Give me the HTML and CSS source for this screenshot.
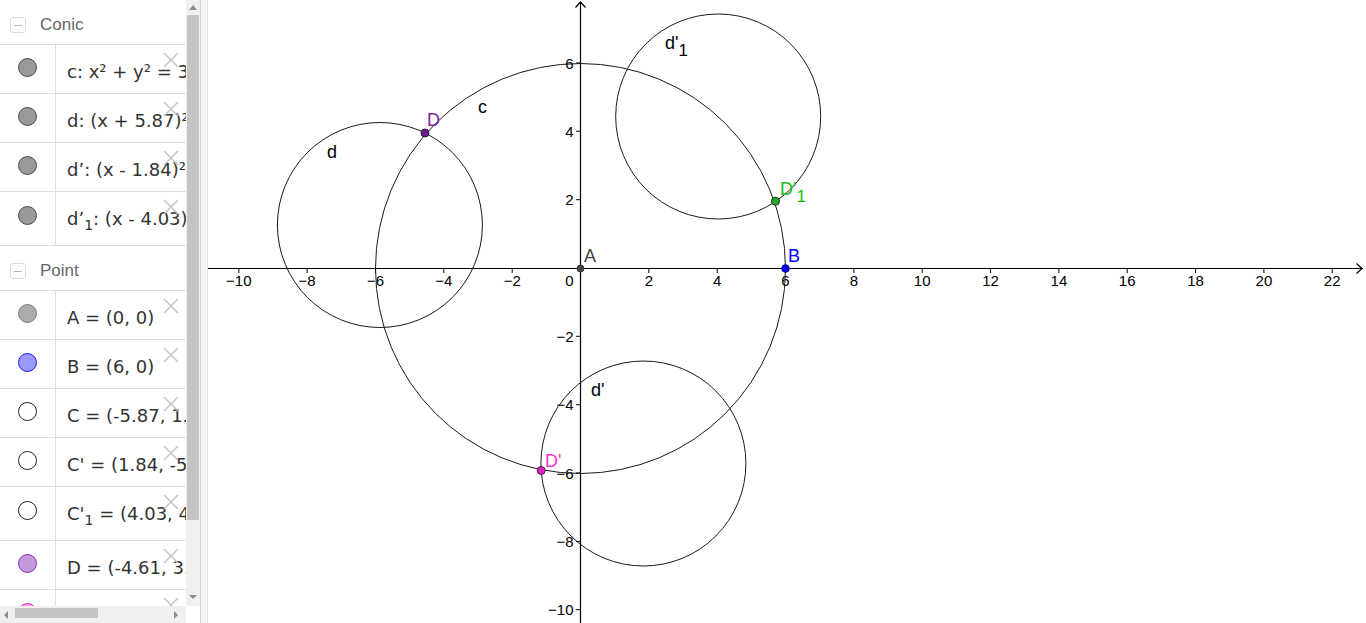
FILE: index.html
```html
<!DOCTYPE html>
<html>
<head>
<meta charset="utf-8">
<title>GeoGebra</title>
<link rel="stylesheet" href="styles.css">
</head>
<body>
<div class="app">
  <div class="algebra">
    <div class="alg-top">
      <div class="alg-list">
        <div class="group-head"><span class="collapse"><span class="minus"></span></span><span class="group-title">Conic</span></div>
        <div class="row">
          <div class="marble-cell"><span class="marble m-conic"></span></div>
          <div class="expr">c: x² + y² = 36</div>
          <svg class="del" viewBox="0 0 16 16"><path d="M1 1L15 15M15 1L1 15"/></svg>
        </div>
        <div class="row">
          <div class="marble-cell"><span class="marble m-conic"></span></div>
          <div class="expr">d: (x + 5.87)² + (y - 1.27)² = 9</div>
          <svg class="del" viewBox="0 0 16 16"><path d="M1 1L15 15M15 1L1 15"/></svg>
        </div>
        <div class="row">
          <div class="marble-cell"><span class="marble m-conic"></span></div>
          <div class="expr">d’: (x - 1.84)² + (y + 5.71)² = 9</div>
          <svg class="del" viewBox="0 0 16 16"><path d="M1 1L15 15M15 1L1 15"/></svg>
        </div>
        <div class="row tall">
          <div class="marble-cell"><span class="marble m-conic"></span></div>
          <div class="expr">d’<sub>1</sub>: (x - 4.03)² + (y - 4.44)² = 9</div>
          <svg class="del" viewBox="0 0 16 16"><path d="M1 1L15 15M15 1L1 15"/></svg>
        </div>
        <div class="group-head"><span class="collapse"><span class="minus"></span></span><span class="group-title">Point</span></div>
        <div class="row">
          <div class="marble-cell"><span class="marble m-a"></span></div>
          <div class="expr">A = (0, 0)</div>
          <svg class="del" viewBox="0 0 16 16"><path d="M1 1L15 15M15 1L1 15"/></svg>
        </div>
        <div class="row">
          <div class="marble-cell"><span class="marble m-b"></span></div>
          <div class="expr">B = (6, 0)</div>
          <svg class="del" viewBox="0 0 16 16"><path d="M1 1L15 15M15 1L1 15"/></svg>
        </div>
        <div class="row">
          <div class="marble-cell"><span class="marble m-off"></span></div>
          <div class="expr">C = (-5.87, 1.27)</div>
          <svg class="del" viewBox="0 0 16 16"><path d="M1 1L15 15M15 1L1 15"/></svg>
        </div>
        <div class="row">
          <div class="marble-cell"><span class="marble m-off"></span></div>
          <div class="expr">C' = (1.84, -5.71)</div>
          <svg class="del" viewBox="0 0 16 16"><path d="M1 1L15 15M15 1L1 15"/></svg>
        </div>
        <div class="row tall">
          <div class="marble-cell"><span class="marble m-off"></span></div>
          <div class="expr">C'<sub>1</sub> = (4.03, 4.44)</div>
          <svg class="del" viewBox="0 0 16 16"><path d="M1 1L15 15M15 1L1 15"/></svg>
        </div>
        <div class="row">
          <div class="marble-cell"><span class="marble m-d"></span></div>
          <div class="expr">D = (-4.61, 3.84)</div>
          <svg class="del" viewBox="0 0 16 16"><path d="M1 1L15 15M15 1L1 15"/></svg>
        </div>
        <div class="row">
          <div class="marble-cell"><span class="marble m-dp"></span></div>
          <div class="expr">D' = (-1.14, -5.89)</div>
          <svg class="del" viewBox="0 0 16 16"><path d="M1 1L15 15M15 1L1 15"/></svg>
        </div>
      </div>
      <div class="vscroll">
        <div class="arr-up"><span class="tri-up"></span></div>
        <div class="vthumb"></div>
        <div class="vtrack"></div>
        <div class="arr-down"><span class="tri-down"></span></div>
      </div>
    </div>
    <div class="hscroll">
      <div class="hbar">
        <div class="arr-left"><span class="tri-left"></span></div>
        <div class="hthumb"></div>
        <div class="htrack"></div>
        <div class="arr-right"><span class="tri-right"></span></div>
      </div>
      <div class="corner"></div>
    </div>
  </div>
  <div class="divider"></div>
  <div class="graphics">
    <svg class="canvas" width="1158" height="623" viewBox="208 0 1158 623">
      <g class="axes">
        <path d="M208 268.5H1363M1356.5 263.5L1362 268.5L1356.5 273.5"/>
        <path d="M580.5 623V2M575.5 7.5L580.5 2L585.5 7.5"/>
        <path class="ticks" d="M238.8 268.5v4.5M307.1 268.5v4.5M375.5 268.5v4.5M443.8 268.5v4.5M512.2 268.5v4.5M648.8 268.5v4.5M717.2 268.5v4.5M785.5 268.5v4.5M853.9 268.5v4.5M922.2 268.5v4.5M990.5 268.5v4.5M1058.9 268.5v4.5M1127.2 268.5v4.5M1195.6 268.5v4.5M1263.9 268.5v4.5M1332.2 268.5v4.5M580.5 63h-4.5M580.5 131.3h-4.5M580.5 199.7h-4.5M580.5 336.3h-4.5M580.5 404.7h-4.5M580.5 473h-4.5M580.5 541.4h-4.5M580.5 609.7h-4.5"/>
      </g>
      <g class="xlabels">
        <text x="238.8" y="286">−10</text>
        <text x="307.1" y="286">−8</text>
        <text x="375.5" y="286">−6</text>
        <text x="443.8" y="286">−4</text>
        <text x="512.2" y="286">−2</text>
        <text x="648.8" y="286">2</text>
        <text x="717.2" y="286">4</text>
        <text x="785.5" y="286">6</text>
        <text x="853.9" y="286">8</text>
        <text x="922.2" y="286">10</text>
        <text x="990.5" y="286">12</text>
        <text x="1058.9" y="286">14</text>
        <text x="1127.2" y="286">16</text>
        <text x="1195.6" y="286">18</text>
        <text x="1263.9" y="286">20</text>
        <text x="1332.2" y="286">22</text>
      </g>
      <g class="ylabels">
        <text x="573.5" y="286">0</text>
        <text x="573.5" y="68.5">6</text>
        <text x="573.5" y="136.8">4</text>
        <text x="573.5" y="205.2">2</text>
        <text x="573.5" y="341.8">−2</text>
        <text x="573.5" y="410.2">−4</text>
        <text x="573.5" y="478.5">−6</text>
        <text x="573.5" y="546.9">−8</text>
        <text x="573.5" y="615.2">−10</text>
      </g>
      <g class="curves">
        <circle cx="580.5" cy="268.5" r="205"/>
        <circle cx="379.9" cy="225" r="102.5"/>
        <circle cx="643.4" cy="463.5" r="102.5"/>
        <circle cx="718.2" cy="116.5" r="102.5"/>
      </g>
      <g class="clabels">
        <text x="478" y="113">c</text>
        <text x="327" y="158">d</text>
        <text x="591" y="396">d'</text>
        <text x="665" y="49">d'<tspan class="sub" dy="7">1</tspan></text>
      </g>
      <g class="points">
        <circle class="pt-a" cx="580.5" cy="268.5" r="3.5"/>
        <circle class="pt-b" cx="785.5" cy="268.5" r="3.8"/>
        <circle class="pt-d" cx="425" cy="133" r="4"/>
        <circle class="pt-dp" cx="541.2" cy="470.5" r="4"/>
        <circle class="pt-dp1" cx="775.5" cy="201.2" r="4"/>
      </g>
      <g class="plabels">
        <text class="lb-a" x="584" y="262">A</text>
        <text class="lb-b" x="788" y="262">B</text>
        <text class="lb-d" x="427" y="126">D</text>
        <text class="lb-dp" x="545" y="467">D'</text>
        <text class="lb-dp1" x="780" y="195">D'<tspan class="sub" dy="7">1</tspan></text>
      </g>
    </svg>
  </div>
</div>
</body>
</html>
```

FILE: styles.css
```css
* { box-sizing: border-box; }
html, body { margin: 0; padding: 0; }
body {
  width: 1366px;
  height: 623px;
  overflow: hidden;
  background: #ffffff;
  font-family: "Liberation Sans", Arial, sans-serif;
}
.app { display: flex; height: 623px; }

/* Algebra view */
.algebra { width: 200px; flex: none; display: flex; flex-direction: column; }
.alg-top { display: flex; height: 606px; }
.alg-list { width: 186px; overflow: hidden; flex: none; }

.group-head {
  height: 45px;
  border-bottom: 1px solid #dedede;
  display: flex;
  align-items: flex-start;
  padding-left: 10px;
}
.collapse {
  width: 16px;
  height: 16px;
  margin-top: 17px;
  border: 1px solid #dcdcdc;
  border-radius: 3px;
  display: flex;
  align-items: center;
  justify-content: center;
}
.minus { width: 8px; height: 1px; background: #b4b4b4; }
.group-title {
  margin-left: 14px;
  padding-top: 15px;
  font-size: 17px;
  line-height: 20px;
  color: #666666;
}

.row {
  position: relative;
  height: 49px;
  border-bottom: 1px solid #dedede;
  display: flex;
}
.row.tall { height: 54px; }
.marble-cell {
  width: 56px;
  flex: none;
  border-right: 1px solid #dedede;
  display: flex;
  justify-content: center;
  padding-top: 13px;
}
.row.tall .marble-cell { padding-top: 14px; }
.marble {
  width: 19px;
  height: 19px;
  border-radius: 50%;
  border: 1px solid #444;
}
.m-conic { background: #999999; border-color: #4a4a4a; }
.m-a { background: #ababab; border-color: #7a7a7a; }
.m-b { background: #9999ff; border-color: #1c1ce6; }
.m-off { background: #ffffff; border-color: #222222; }
.m-d { background: #c39ad9; border-color: #8a2db3; }
.m-dp { background: #ff9de6; border-color: #d62bb5; }

.expr {
  padding-left: 11px;
  padding-top: 17px;
  font-family: "DejaVu Sans", sans-serif;
  font-size: 18px;
  line-height: 20px;
  color: #333333;
  white-space: nowrap;
}
.expr sub {
  font-size: 14px;
  line-height: 0;
  vertical-align: -5px;
}
.del {
  position: absolute;
  left: 163px;
  top: 7px;
  width: 16px;
  height: 16px;
}
.del path { stroke: #c4c4c4; stroke-width: 1.5; fill: none; }

/* vertical scrollbar */
.vscroll {
  width: 14px;
  flex: none;
  background: #f0f0f0;
  display: flex;
  flex-direction: column;
  align-items: center;
}
.arr-up { height: 15px; width: 100%; display: flex; justify-content: center; padding-top: 5px; }
.tri-up {
  width: 0; height: 0;
  border-left: 4px solid transparent;
  border-right: 4px solid transparent;
  border-bottom: 5px solid #8c8c8c;
}
.vthumb { width: 12px; height: 505px; background: #c4c4c4; }
.vtrack { flex: 1; }
.arr-down { height: 14px; width: 100%; display: flex; justify-content: center; padding-top: 3px; }
.tri-down {
  width: 0; height: 0;
  border-left: 4px solid transparent;
  border-right: 4px solid transparent;
  border-top: 4px solid #8c8c8c;
}

/* horizontal scrollbar */
.hscroll { height: 17px; display: flex; }
.hbar {
  width: 186px;
  background: #f0f0f0;
  display: flex;
  align-items: flex-start;
}
.arr-left { width: 15px; height: 17px; display: flex; justify-content: center; padding-top: 5px; padding-right: 4px; }
.tri-left {
  width: 0; height: 0;
  border-top: 4px solid transparent;
  border-bottom: 4px solid transparent;
  border-right: 4px solid #8c8c8c;
}
.hthumb { width: 83px; height: 10px; margin-top: 2px; background: #c4c4c4; }
.htrack { flex: 1; }
.arr-right { width: 12px; height: 17px; display: flex; justify-content: flex-start; padding-top: 5px; }
.tri-right {
  width: 0; height: 0;
  border-top: 4px solid transparent;
  border-bottom: 4px solid transparent;
  border-left: 4px solid #8c8c8c;
}
.corner { width: 14px; background: #ffffff; }

/* divider */
.divider {
  width: 8px;
  flex: none;
  background: #f4f4f4;
  border-left: 1px solid #d2d2d2;
  border-right: 1px solid #e0e0e0;
}

/* graphics */
.graphics { flex: 1; overflow: hidden; }
.canvas { display: block; }
.axes path { stroke: #000; stroke-width: 1.2; fill: none; }
.axes .ticks { stroke-width: 1; }
.xlabels text, .ylabels text {
  font-family: "Liberation Sans", Arial, sans-serif;
  font-size: 15px;
  fill: #000;
}
.xlabels text { text-anchor: middle; }
.ylabels text { text-anchor: end; }
.curves circle { fill: none; stroke: #1a1a1a; stroke-width: 1; }
.clabels text {
  font-family: "Liberation Sans", Arial, sans-serif;
  font-size: 18px;
  fill: #000;
}
.plabels text {
  font-family: "Liberation Sans", Arial, sans-serif;
  font-size: 18px;
}
.sub { font-size: 17px; }
.lb-a { fill: #444444; }
.lb-b { fill: #0000ff; }
.lb-d { fill: #7b1fa8; }
.lb-dp { fill: #ff33cc; }
.lb-dp1 { fill: #11bb11; }
.points circle { stroke-width: 1; }
.pt-a { fill: #444444; stroke: #333; }
.pt-b { fill: #0000ff; stroke: #00008a; }
.pt-d { fill: #6a1b8f; stroke: #2a1a33; }
.pt-dp { fill: #e020c4; stroke: #4a1a40; }
.pt-dp1 { fill: #22aa22; stroke: #1a331a; }
```
